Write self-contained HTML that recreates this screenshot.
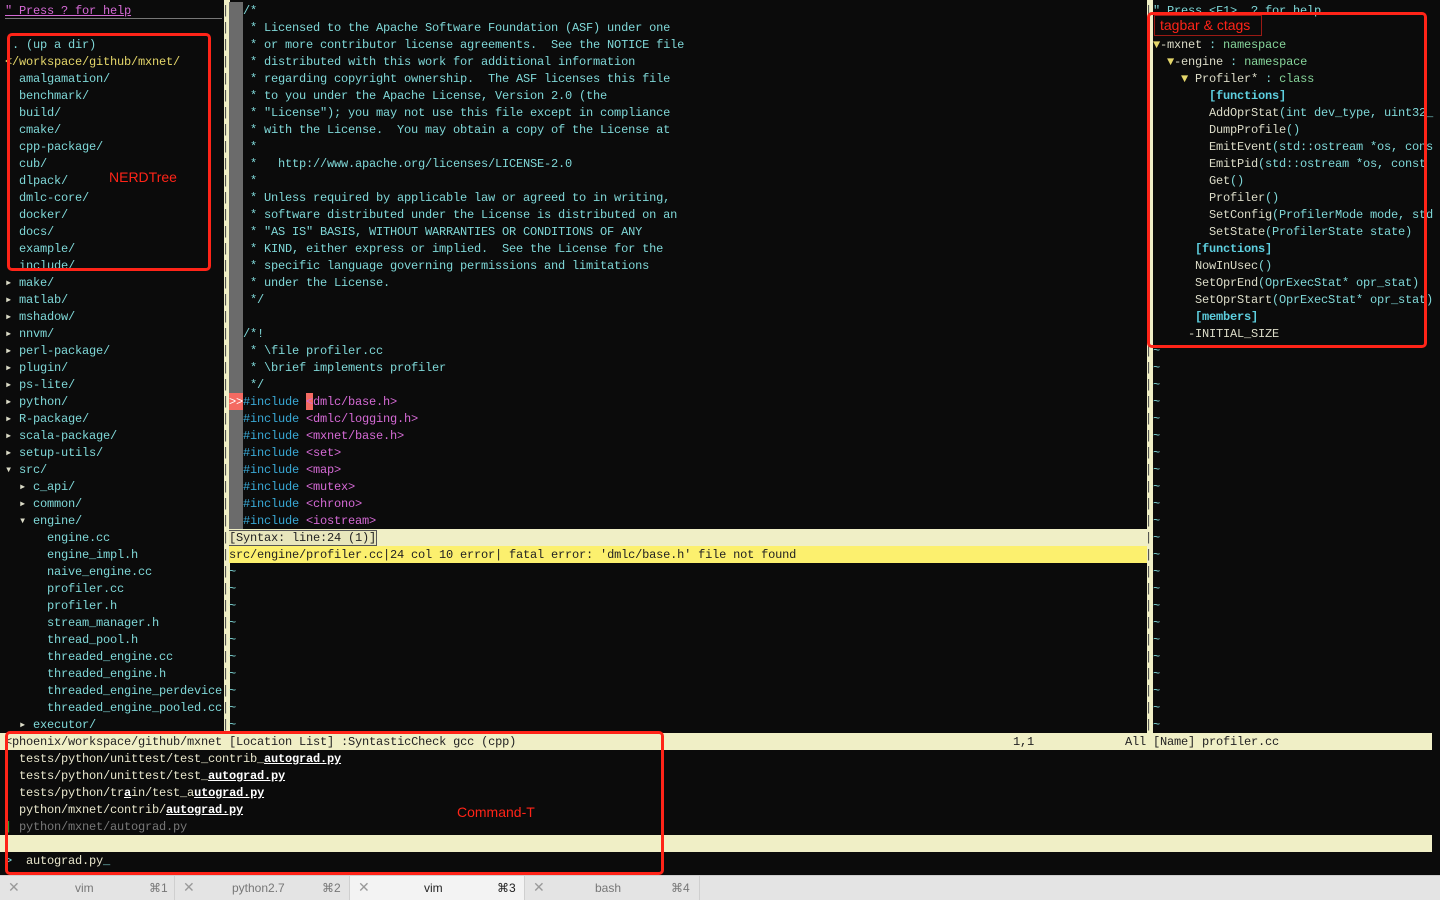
<!DOCTYPE html>
<html><head><meta charset="utf-8"><style>
*{margin:0;padding:0;box-sizing:border-box}
body{width:1440px;height:900px;background:#0b0b0b;position:relative;overflow:hidden;font-family:"Liberation Mono",monospace;font-size:11.67px;}
pre{position:absolute;font-family:"Liberation Mono",monospace;font-size:12px;letter-spacing:-0.2px;line-height:17px;white-space:pre;overflow:hidden;color:#7fd8d8;padding-top:1px}
.r{position:absolute}
.c{color:#7fd8d8}.y{color:#e4d66a}.m{color:#d56ad5}.b{color:#39a9d6}.g{color:#86d49a}.w{color:#dcdcc8}.cb{color:#5ed0e0;font-weight:bold}
.u{text-decoration:underline;font-weight:bold;color:#fff}
.box{position:absolute;border:3px solid #ff2418;border-radius:5px}
.lab{position:absolute;color:#ff2418;font-family:"Liberation Sans",sans-serif;font-size:14px}
.tab{position:absolute;top:876px;height:24px;width:175px;border-right:1px solid #cfcfcf;font-family:"Liberation Sans",sans-serif;font-size:12px;color:#777}
.tab span{position:absolute;top:5px}
</style></head><body>
<div class="r" style="left:224px;top:0;width:6px;height:733px;background:#f0efc6"></div>
<div class="r" style="left:1147px;top:0;width:6px;height:733px;background:#f0efc6"></div>
<pre style="left:222px;top:2px;width:7px;height:731px;color:#444">|
|
|
|
|
|
|
|
|
|
|
|
|
|
|
|
|
|
|
|
|
|
|
|
|
|
|
|
|
|
|
|
|
|
|
|
|
|
|
|
|
|
|</pre>
<pre style="left:1145px;top:2px;width:7px;height:731px;color:#444">|
|
|
|
|
|
|
|
|
|
|
|
|
|
|
|
|
|
|
|
|
|
|
|
|
|
|
|
|
|
|
|
|
|
|
|
|
|
|
|
|
|
|</pre>
<div class="r" style="left:229px;top:2px;width:14px;height:527px;background:#6b6b6b"></div>
<div class="r" style="left:229px;top:393px;width:14px;height:17px;background:#f46a62"></div>
<div class="r" style="left:306px;top:393px;width:7px;height:17px;background:#f46a62"></div>
<div class="r" style="left:229px;top:529px;width:918px;height:17px;background:#f0efc6"></div>
<div class="r" style="left:229px;top:546px;width:918px;height:17px;background:#fcf06e"></div>
<div class="r" style="left:5px;top:18px;width:217px;height:1px;background:#777"></div>
<pre style="left:5px;top:2px;width:217px;height:731px"><span class="m" style="text-decoration:underline">" Press ? for help</span>

 . (up a dir)
<span class="y">&lt;/workspace/github/mxnet/</span>
  amalgamation/
  benchmark/
  build/
  cmake/
  cpp-package/
  cub/
  dlpack/
  dmlc-core/
  docker/
  docs/
  example/
  include/
<span class="w">▸</span> make/
<span class="w">▸</span> matlab/
<span class="w">▸</span> mshadow/
<span class="w">▸</span> nnvm/
<span class="w">▸</span> perl-package/
<span class="w">▸</span> plugin/
<span class="w">▸</span> ps-lite/
<span class="w">▸</span> python/
<span class="w">▸</span> R-package/
<span class="w">▸</span> scala-package/
<span class="w">▸</span> setup-utils/
<span class="w">▾</span> src/
  <span class="w">▸</span> c_api/
  <span class="w">▸</span> common/
  <span class="w">▾</span> engine/
      engine.cc
      engine_impl.h
      naive_engine.cc
      profiler.cc
      profiler.h
      stream_manager.h
      thread_pool.h
      threaded_engine.cc
      threaded_engine.h
      threaded_engine_perdevice
      threaded_engine_pooled.cc
  <span class="w">▸</span> executor/</pre>
<pre style="left:243px;top:2px;width:904px;height:527px">/*
 * Licensed to the Apache Software Foundation (ASF) under one
 * or more contributor license agreements.  See the NOTICE file
 * distributed with this work for additional information
 * regarding copyright ownership.  The ASF licenses this file
 * to you under the Apache License, Version 2.0 (the
 * "License"); you may not use this file except in compliance
 * with the License.  You may obtain a copy of the License at
 *
 *   http://www.apache.org/licenses/LICENSE-2.0
 *
 * Unless required by applicable law or agreed to in writing,
 * software distributed under the License is distributed on an
 * "AS IS" BASIS, WITHOUT WARRANTIES OR CONDITIONS OF ANY
 * KIND, either express or implied.  See the License for the
 * specific language governing permissions and limitations
 * under the License.
 */

/*!
 * \file profiler.cc
 * \brief implements profiler
 */
<span class="b">#include</span> <span class="m">&lt;dmlc/base.h&gt;</span>
<span class="b">#include</span> <span class="m">&lt;dmlc/logging.h&gt;</span>
<span class="b">#include</span> <span class="m">&lt;mxnet/base.h&gt;</span>
<span class="b">#include</span> <span class="m">&lt;set&gt;</span>
<span class="b">#include</span> <span class="m">&lt;map&gt;</span>
<span class="b">#include</span> <span class="m">&lt;mutex&gt;</span>
<span class="b">#include</span> <span class="m">&lt;chrono&gt;</span>
<span class="b">#include</span> <span class="m">&lt;iostream&gt;</span></pre>
<pre style="left:229px;top:393px;width:14px;height:17px;color:#fff">&gt;&gt;</pre>
<pre style="left:229px;top:529px;width:918px;height:204px;color:#7fd8d8"><span style="color:#222;background:#e8e6bc;outline:1px solid #555">[Syntax: line:24 (1)]</span>
<span style="color:#222">src/engine/profiler.cc|24 col 10 error| fatal error: 'dmlc/base.h' file not found</span>
~
~
~
~
~
~
~
~
~
~</pre>
<pre style="left:1153px;top:2px;width:287px;height:731px">" Press &lt;F1&gt;, ? for help

<span class="y">▼</span><span class="w">-mxnet</span> : <span class="g">namespace</span>
  <span class="y">▼</span><span class="w">-engine</span> : <span class="g">namespace</span>
    <span class="y">▼</span> <span class="w">Profiler*</span> : <span class="g">class</span>
        <span class="cb">[functions]</span>
        <span class="w">AddOprStat</span>(int dev_type, uint32_
        <span class="w">DumpProfile</span>()
        <span class="w">EmitEvent</span>(std::ostream *os, cons
        <span class="w">EmitPid</span>(std::ostream *os, const
        <span class="w">Get</span>()
        <span class="w">Profiler</span>()
        <span class="w">SetConfig</span>(ProfilerMode mode, std
        <span class="w">SetState</span>(ProfilerState state)
      <span class="cb">[functions]</span>
      <span class="w">NowInUsec</span>()
      <span class="w">SetOprEnd</span>(OprExecStat* opr_stat)
      <span class="w">SetOprStart</span>(OprExecStat* opr_stat)
      <span class="cb">[members]</span>
     <span class="w">-INITIAL_SIZE</span>
~
~
~
~
~
~
~
~
~
~
~
~
~
~
~
~
~
~
~
~
~
~
~</pre>
<div class="r" style="left:0;top:733px;width:1432px;height:17px;background:#f0efc6"></div>
<pre style="left:5px;top:733px;width:1000px;height:17px;color:#222">&lt;phoenix/workspace/github/mxnet [Location List] :SyntasticCheck gcc (cpp)</pre>
<pre style="left:1013px;top:733px;width:300px;height:17px;color:#222">1,1             All [Name] profiler.cc</pre>
<pre style="left:5px;top:750px;width:1000px;height:85px;color:#e8e6cc">  tests/python/unittest/test_contrib_<span class="u">autograd.py</span>
  tests/python/unittest/test_<span class="u">autograd.py</span>
  tests/python/tr<span class="u">a</span>in/test_a<span class="u">utograd.py</span>
  python/mxnet/contrib/<span class="u">autograd.py</span>
<span style="color:#3a3">|</span> <span style="color:#777">python/mxnet/autograd.py</span></pre>
<div class="r" style="left:0;top:835px;width:1432px;height:17px;background:#f0efc6"></div>
<pre style="left:5px;top:852px;width:300px;height:17px;color:#e8e6cc"><span class="c">&gt;</span>  autograd.py<span class="c">_</span></pre>
<div class="r" style="left:0;top:875px;width:1440px;height:25px;background:#e4e4e4;border-top:1px solid #cfcfcf"></div>
<div class="tab" style="left:0"><span style="left:8px;color:#999;font-size:14px;top:3px">✕</span><span style="left:75px">vim</span><span style="left:149px">⌘1</span></div>
<div class="tab" style="left:175px"><span style="left:8px;color:#999;font-size:14px;top:3px">✕</span><span style="left:57px">python2.7</span><span style="left:147px">⌘2</span></div>
<div class="tab" style="left:350px;background:#f3f3f3"><span style="left:8px;color:#999;font-size:14px;top:3px">✕</span><span style="left:74px;color:#222">vim</span><span style="left:147px;color:#222">⌘3</span></div>
<div class="tab" style="left:525px"><span style="left:8px;color:#999;font-size:14px;top:3px">✕</span><span style="left:70px">bash</span><span style="left:146px">⌘4</span></div>
<div class="box" style="left:7px;top:33px;width:204px;height:238px"></div>
<div class="lab" style="left:109px;top:169px">NERDTree</div>
<div class="box" style="left:1147px;top:12px;width:280px;height:336px"></div>
<div class="r" style="left:1154px;top:15px;width:108px;height:21px;border:1px solid #9a1a14;background:#0b0b0b"></div>
<div class="lab" style="left:1160px;top:17px">tagbar &amp; ctags</div>
<div class="box" style="left:5px;top:731px;width:659px;height:144px"></div>
<div class="lab" style="left:457px;top:804px">Command-T</div>
</body></html>
